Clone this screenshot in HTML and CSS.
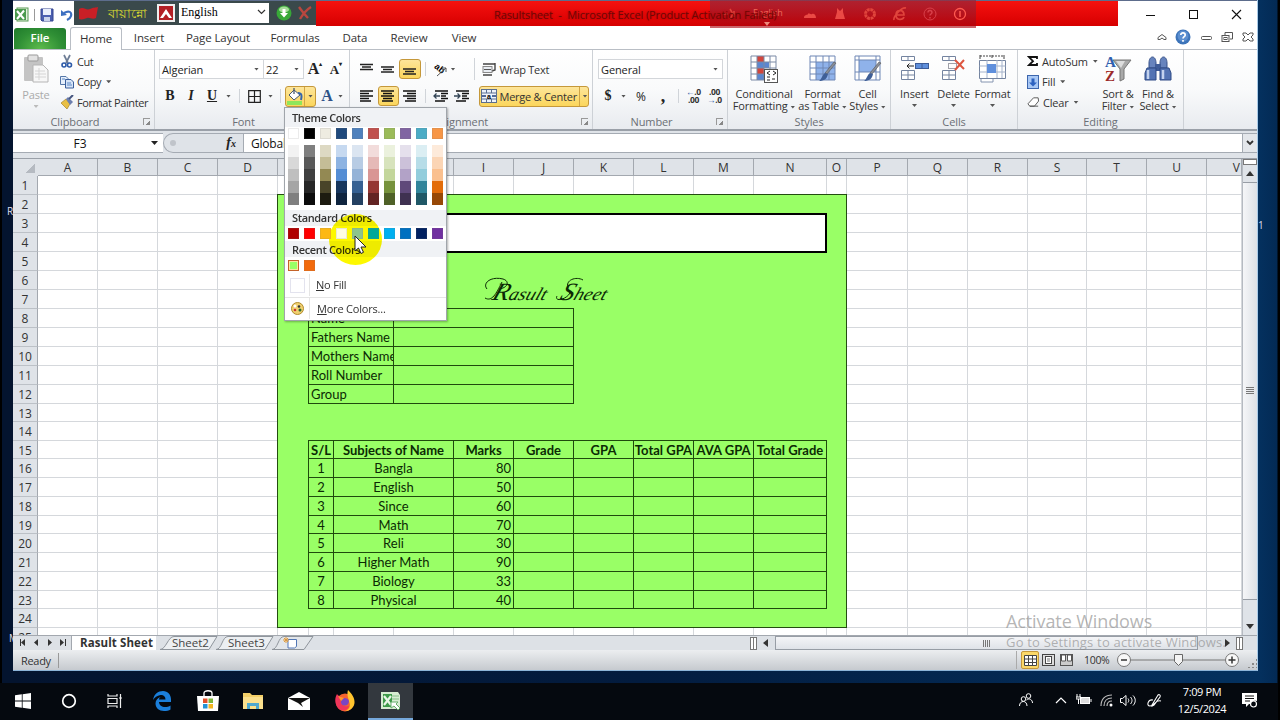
FILE: index.html
```html
<!DOCTYPE html>
<html lang="en">
<head>
    <meta charset="UTF-8">
    <meta name="viewport" content="width=device-width, initial-scale=1.0">
    <title>Rasultsheet - Microsoft Excel</title>
    <link rel="stylesheet" href="styles.css">
</head>
<body>
    <span class="desk-text desk-r">R</span>
    <span class="desk-text desk-m">M</span>
    <span class="desk-text desk-1">1</span>

    <div class="window">
        <!-- Title bar -->
        <div class="titlebar">
            <div class="quick">
                <svg width="15" height="15" viewBox="0 0 15 15"><rect x="3" y="1" width="11" height="13" fill="#e4f2e0" stroke="#5a9a55"/><rect x="1" y="2" width="11" height="11" fill="#4b9a4e"/><path d="M3 4l7 8M10 3.500L3 12" stroke="#fff" stroke-width="2"/></svg>
                <i class="quick-sep"></i>
                <svg width="14" height="14" viewBox="0 0 14 14"><path d="M1 1h12v12H2l-1-1z" fill="#4b5fb0" stroke="#35458f"/><rect x="3" y="1" width="8" height="6" fill="#e9eefb"/><rect x="4" y="9" width="6" height="4" fill="#c9d2ea"/></svg>
                <svg class="undo" width="12" height="14" viewBox="0 0 12 14"><path d="M3 5c5-3 8-1 7 3-.5 2-2 3-4 4" fill="none" stroke="#3c6fc0" stroke-width="2.200"/><path d="M0 8V2l6 5z" fill="#3c6fc0"/></svg>
            </div>
            <div class="keyboard-bar">
                <svg class="flag" width="21" height="15" viewBox="0 0 21 15"><path d="M1 3c5-3 7 2 11 0s5-1 8-2l-2 11c-4 2-6-1-9 0s-5 2-8 1z" fill="#c81f26"/></svg>
                <span class="bangla">বায়ান্নো</span>
                <svg width="18" height="18" viewBox="0 0 18 18"><rect width="18" height="18" fill="#eee"/><rect x="2" y="2" width="14" height="14" fill="#b31f24"/><path d="M3 14l6-9 6 9h-3l-3-4-3 4z" fill="#fff"/></svg>
                <div class="lang-select"><span>English</span><svg width="9" height="6" viewBox="0 0 9 6"><path d="M1 1l3.500 3.500L8 1" fill="none" stroke="#333" stroke-width="1.200"/></svg></div>
                <svg width="16" height="16" viewBox="0 0 16 16"><circle cx="8" cy="8" r="7.500" fill="#38a838"/><ellipse cx="8" cy="4.500" rx="5" ry="3" fill="#a5dc9a"/><path d="M6.500 4h3v4H12l-4 4.500L4 8h2.500z" fill="#fff"/></svg>
                <svg width="16" height="15" viewBox="0 0 16 15"><path d="M2 1c3 4 5 7 9 11M14 1C9 4 6 8 3 13" stroke="#b8473f" stroke-width="2.400" fill="none"/></svg>
            </div>
            <div class="red-bar">
                <span class="title-text">Rasultsheet&nbsp; -&nbsp; Microsoft Excel (Product Activation Failed)</span>
                <div class="ghost-bar">
                    <svg width="16" height="14" viewBox="0 0 16 14"><path d="M1 7h5M8 2l3 5-3 5M12 4v6" stroke="#e0443c" fill="none" stroke-width="1.500"/></svg>
                    <span>English</span>
                    <svg width="14" height="14" viewBox="0 0 14 14"><path d="M1 11c0-4 3-2 4-4s2 1 4 0 4 1 4 4z" fill="#ea4a45"/></svg>
                    <svg width="14" height="14" viewBox="0 0 14 14"><path d="M4 1l3 3 3-3v4l2 7H2l2-7z" fill="#ea4a45"/></svg>
                    <svg width="14" height="14" viewBox="0 0 14 14"><circle cx="7" cy="7" r="4.500" fill="none" stroke="#e0443c" stroke-width="3" stroke-dasharray="2.800 .7"/></svg>
                    <svg width="14" height="14" viewBox="0 0 14 14"><path d="M3 8h8c0-6-8-6-8 0s7 5 8 2M1 13C0 10 8 0 13 1" fill="none" stroke="#e0443c" stroke-width="1.700"/></svg>
                    <svg width="14" height="14" viewBox="0 0 14 14"><circle cx="7" cy="7" r="6" fill="none" stroke="#d8404a"/><path d="M5 5.500c0-3 4-2.500 4 0 0 1.500-2 1.500-2 3M7 10v1.500" fill="none" stroke="#d8404a" stroke-width="1.500"/></svg>
                    <svg width="14" height="14" viewBox="0 0 14 14"><circle cx="7" cy="7" r="5.500" fill="none" stroke="#ff5a50" stroke-width="1.300"/><path d="M7 4v6" stroke="#ff5a50" stroke-width="1.500"/></svg>
                    <i class="ghost-arrow"></i>
                </div>
            </div>
            <div class="win-buttons">
                <svg width="11" height="11" viewBox="0 0 11 11"><path d="M1 6.500h9" stroke="#111"/></svg>
                <svg width="11" height="11" viewBox="0 0 11 11"><rect x="1.500" y="1.500" width="8" height="8" fill="none" stroke="#111"/></svg>
                <svg width="11" height="11" viewBox="0 0 11 11"><path d="M1 1l9 9M10 1l-9 9" stroke="#111" stroke-width="1.100"/></svg>
            </div>
        </div>

        <!-- Ribbon tabs -->
        <div class="tabs">
            <div class="tab-file">File</div>
            <div class="tab tab-home">Home</div>
            <div class="tab t-insert">Insert</div>
            <div class="tab t-layout">Page Layout</div>
            <div class="tab t-formulas">Formulas</div>
            <div class="tab t-data">Data</div>
            <div class="tab t-review">Review</div>
            <div class="tab t-view">View</div>
            <div class="tab-icons">
                <svg width="10" height="8" viewBox="0 0 10 8"><path d="M1 6.500v-2l4-3 4 3v2H7L5 5 3 6.500z" fill="none" stroke="#555"/></svg>
                <svg width="16" height="16" viewBox="0 0 16 16"><circle cx="8" cy="8" r="7.500" fill="#3d74b9"/><circle cx="8" cy="7" r="5.500" fill="#5c8fd0"/><path d="M5.800 6c0-3 4.400-2.800 4.400 0 0 1.600-2.200 1.700-2.200 3.500M8 11v1.800" fill="none" stroke="#fff" stroke-width="1.700"/></svg>
                <svg width="11" height="8" viewBox="0 0 11 8"><rect x=".5" y="3.500" width="10" height="3" rx="1" fill="none" stroke="#555"/></svg>
                <svg width="12" height="11" viewBox="0 0 12 11"><path d="M4 3V.5h7.500V7H9" fill="none" stroke="#555"/><rect x="1" y="3.500" width="7" height="6" fill="none" stroke="#555"/><rect x="3" y="5.500" width="3" height="2" fill="none" stroke="#555"/></svg>
                <svg width="12" height="10" viewBox="0 0 12 10"><path d="M1 1h3l2 2 2-2h3v2L9 5l2 2v2H8L6 7 4 9H1V7l2-2-2-2z" fill="none" stroke="#555"/></svg>
            </div>
        </div>

        <!-- Ribbon -->
        <div class="ribbon">
            <div class="group g-clipboard">
                <div class="group-body">
                    <div class="big paste">
                        <svg width="28" height="30" viewBox="0 0 28 30"><rect x="2" y="3" width="19" height="24" rx="1" fill="#c4c4c4"/><rect x="6" y="1" width="10" height="6" rx="1" fill="#e2e2e2" stroke="#999"/><path d="M11 11h10l5 5v12H11z" fill="#f7f7f7" stroke="#b5b5b5"/><path d="M13 17h10M13 20h11M13 23h11M17 14v12" stroke="#d5d5d5"/></svg>
                        <span>Paste</span>
                        <i class="arrow"></i>
                    </div>
                    <div class="rows">
                        <div class="row"><svg width="14" height="14" viewBox="0 0 14 14"><path d="M4 1l4 8M10 1L6 9" stroke="#6d7d95" stroke-width="1.700"/><circle cx="4" cy="11" r="2" fill="none" stroke="#2d5aa8" stroke-width="1.600"/><circle cx="9.500" cy="11" r="2" fill="none" stroke="#2d5aa8" stroke-width="1.600"/></svg><span>Cut</span></div>
                        <div class="row"><svg width="14" height="14" viewBox="0 0 14 14"><path d="M.5 1.500H6l2 2v6H.5z" fill="#e6effb" stroke="#5577a8"/><path d="M5.500 4.500H11l2.500 2.500v6h-8z" fill="#d6e4f7" stroke="#3a5f9c"/><path d="M7 8h4M7 10h5M2 4h3" stroke="#5b86c4"/></svg><span>Copy</span><i class="arrow"></i></div>
                        <div class="row"><svg width="14" height="14" viewBox="0 0 14 14"><path d="M1 8l5-4 4 5-3 5z" fill="#e8bf45" stroke="#a9842b" stroke-width=".7"/><path d="M6 4l2-2 5 5-3 3z" fill="#6c7fae"/><path d="M9 4l4-4" stroke="#45557f" stroke-width="2"/></svg><span>Format Painter</span></div>
                    </div>
                </div>
                <div class="group-label"><span>Clipboard</span><i class="launcher"></i></div>
            </div>

            <div class="group g-font">
                <div class="group-body stack">
                    <div class="line">
                        <div class="combo font-name"><span>Algerian</span><i class="arrow"></i></div>
                        <div class="combo font-size"><span>22</span><i class="arrow"></i></div>
                        <span class="glyph w22 serif grow">A<sup>&#9652;</sup></span>
                        <span class="glyph w20 serif shrink">A<sup>&#9662;</sup></span>
                    </div>
                    <div class="line">
                        <span class="glyph w22 serif bold">B</span>
                        <span class="glyph w20 serif ital">I</span>
                        <span class="glyph w22 serif under">U</span>
                        <i class="arrow"></i>
                        <i class="sep"></i>
                        <svg class="border-ico" width="13" height="13" viewBox="0 0 13 13"><path d="M.7.7h11.600v11.600H.7zM6.500 1v11M1 6.500h11" fill="none" stroke="#222" stroke-width="1.200"/></svg>
                        <i class="arrow"></i>
                        <i class="sep"></i>
                        <div class="fill-btn">
                            <svg width="18" height="18" viewBox="0 0 18 18"><rect x="1" y="14" width="15" height="4" fill="#8fe65b"/><path d="M3 8l5-5 6 5-6 5z" fill="#fff" stroke="#4a5a70"/><path d="M8 1v6" stroke="#4a5a70" stroke-width="1.300"/><path d="M12 6c4 0 4 3 3 7" fill="none" stroke="#3465ad" stroke-width="2"/></svg>
                            <b><i class="arrow"></i></b>
                        </div>
                        <span class="glyph w22 serif font-color">A</span>
                        <i class="arrow"></i>
                    </div>
                </div>
                <div class="group-label"><span>Font</span><i class="launcher"></i></div>
            </div>

            <div class="group g-align">
                <div class="group-body stack">
                    <div class="line">
                        <span class="ic"><svg width="14" height="12" viewBox="0 0 14 12"><path d="M0 1.500h13M2 4h9M0 6.500h13" stroke="#222" stroke-width="1.500"/></svg></span>
                        <span class="ic"><svg width="14" height="12" viewBox="0 0 14 12"><path d="M0 4h13M2 6.500h9M0 9h13" stroke="#222" stroke-width="1.500"/></svg></span>
                        <span class="ic on"><svg width="14" height="12" viewBox="0 0 14 12"><path d="M0 6h13M2 8.500h9M0 11h13" stroke="#222" stroke-width="1.500"/></svg></span>
                        <i class="sep"></i>
                        <svg class="orient" width="16" height="15" viewBox="0 0 16 15"><text x="2" y="7" font-size="9" transform="rotate(38 4 6)" class="svg-bold">ab</text><path d="M5 14L14 6M10 6h4v4" fill="none" stroke="#555"/></svg>
                        <i class="arrow"></i>
                        <div class="wrap-btn">
                            <svg width="15" height="15" viewBox="0 0 15 15"><path d="M1 2h12M1 13h9M13 1v7l-3 1" fill="none" stroke="#444" stroke-width="1.400"/><rect x="1" y="4.500" width="9" height="6" fill="#e8ecf2" stroke="#888"/><path d="M2 7.500h7" stroke="#555"/></svg>
                            <span>Wrap Text</span>
                        </div>
                    </div>
                    <div class="line">
                        <span class="ic"><svg width="14" height="12" viewBox="0 0 14 12"><path d="M0 1h13M0 3.500h9M0 6h13M0 8.500h9M0 11h11" stroke="#111" stroke-width="1.500"/></svg></span>
                        <span class="ic on"><svg width="14" height="12" viewBox="0 0 14 12"><path d="M0 1h13M2 3.500h9M0 6h13M2 8.500h9M1 11h11" stroke="#111" stroke-width="1.500"/></svg></span>
                        <span class="ic"><svg width="14" height="12" viewBox="0 0 14 12"><path d="M0 1h13M4 3.500h9M0 6h13M4 8.500h9M2 11h11" stroke="#111" stroke-width="1.500"/></svg></span>
                        <i class="sep"></i>
                        <span class="ic"><svg width="15" height="12" viewBox="0 0 15 12"><path d="M2 1h13M8 3.500h7M8 6h5M8 8.500h7M2 11h10" stroke="#111" stroke-width="1.500"/><path d="M7 6H1M3.500 3.500L1 6l2.500 2.500" fill="none" stroke="#345" stroke-width="1.300"/></svg></span>
                        <span class="ic"><svg width="15" height="12" viewBox="0 0 15 12"><path d="M2 1h13M8 3.500h7M8 6h5M8 8.500h7M2 11h10" stroke="#111" stroke-width="1.500"/><path d="M0 6h6M3.500 3.500L6 6 3.500 8.500" fill="none" stroke="#345" stroke-width="1.300"/></svg></span>
                        <div class="merge-btn">
                            <svg width="16" height="14" viewBox="0 0 16 14"><rect x=".5" y=".5" width="15" height="13" fill="#eef3fb" stroke="#5b6f90"/><path d="M1 4h14M1 10h14M5.500 1v3M10.500 1v3M5.500 10v3M10.500 10v3" stroke="#5b6f90"/><path d="M1 7h4M15 7h-4" stroke="#223e7a" stroke-width="1.600"/><text x="6" y="9.500" font-size="7" class="svg-bold">a</text></svg>
                            <span>Merge &amp; Center</span>
                            <b><i class="arrow"></i></b>
                        </div>
                    </div>
                </div>
                <div class="group-label"><span>Alignment</span><i class="launcher"></i></div>
            </div>

            <div class="group g-number">
                <div class="group-body stack">
                    <div class="line">
                        <div class="combo num-format"><span>General</span><i class="arrow"></i></div>
                    </div>
                    <div class="line">
                        <span class="glyph w20 serif bold">$</span>
                        <i class="arrow"></i>
                        <span class="glyph w22 pct">%</span>
                        <span class="glyph w22 serif bold comma">,</span>
                        <i class="sep"></i>
                        <span class="dec"><em>&#8592;</em>.0<br>.00</span>
                        <span class="dec">.00<br><em>&#8594;</em>.0</span>
                    </div>
                </div>
                <div class="group-label"><span>Number</span><i class="launcher"></i></div>
            </div>

            <div class="group g-styles">
                <div class="group-body">
                    <div class="big cond">
                        <svg width="28" height="28" viewBox="0 0 28 28"><path d="M1 1h25v24H1z" fill="#fff"/><path d="M7 1h7v6H7zM7 13h7v6H7z" fill="#d2463c"/><path d="M7 7h12v6H7zM7 19h7v6H7z" fill="#5b86d0"/><path d="M1 1h25v24H1zM7 1v24M14 1v24M20 1v24M1 7h25M1 13h25M1 19h25" fill="none" stroke="#7b8aa5"/><rect x="14.500" y="14.500" width="13" height="13" fill="#fff" stroke="#555"/><path d="M20 16l-3 2 3 2M17 22h3M23 16l3 2-3 2M22 24h3M17 25h3" fill="none" stroke="#222"/></svg>
                        <span>Conditional<br>Formatting <i class="arrow"></i></span>
                    </div>
                    <div class="big fmt-table">
                        <svg width="28" height="28" viewBox="0 0 28 28"><path d="M1 1h25v24H1z" fill="#fff"/><path d="M7 7h19v18H7z" fill="#8fb2ea"/><path d="M1 1h25v24H1zM7 1v24M14 1v24M20 1v24M1 7h25M1 13h25M1 19h25" fill="none" stroke="#6f87b5"/><path d="M27 8L18 19l-2-1 9-11z" fill="#8b8f98" stroke="#555" stroke-width=".6"/><path d="M19 19c-1 5-4 7-9 7 3-2 3-6 6-8z" fill="#3f5f97"/></svg>
                        <span>Format<br>as Table <i class="arrow"></i></span>
                    </div>
                    <div class="big cell-st">
                        <svg width="28" height="28" viewBox="0 0 28 28"><path d="M1 1h25v24H1z" fill="#fff" stroke="#6f87b5"/><path d="M5 5h17v12H5z" fill="#8fb2ea"/><path d="M5 1v24M22 1v24M1 5h25M1 17h25" fill="none" stroke="#6f87b5"/><path d="M27 8L18 19l-2-1 9-11z" fill="#8b8f98" stroke="#555" stroke-width=".6"/><path d="M19 19c-1 5-4 7-9 7 3-2 3-6 6-8z" fill="#3f5f97"/></svg>
                        <span>Cell<br>Styles <i class="arrow"></i></span>
                    </div>
                </div>
                <div class="group-label flat"><span>Styles</span></div>
            </div>

            <div class="group g-cells">
                <div class="group-body">
                    <div class="big cell-btn">
                        <svg width="29" height="28" viewBox="0 0 29 28"><path d="M1.500 1.500h13v4h-13zM8 1.500v4M1.500 15.500h13v9h-13zM8 15.500v9M1.500 20h13" fill="#fff" stroke="#7484a0"/><rect x="15.500" y="8.500" width="13" height="5" fill="#5f8fdc" stroke="#3c5c98"/><path d="M22 8v6" stroke="#3c5c98"/><path d="M14 11H7M9.500 8.500L7 11l2.500 2.500" fill="none" stroke="#222"/></svg>
                        <span>Insert</span><i class="arrow"></i>
                    </div>
                    <div class="big cell-btn">
                        <svg width="29" height="28" viewBox="0 0 29 28"><path d="M3.500 1.500h13v4h-13zM10 1.500v4M3.500 15.500h13v9h-13zM10 15.500v9M3.500 20h13" fill="#fff" stroke="#7484a0"/><rect x="9.500" y="8.500" width="8" height="5" fill="none" stroke="#445" stroke-dasharray="1 1"/><path d="M16 5l9 9M25 5l-9 10" stroke="#dd5640" stroke-width="2"/></svg>
                        <span>Delete</span><i class="arrow"></i>
                    </div>
                    <div class="big cell-btn">
                        <svg width="29" height="28" viewBox="0 0 29 28"><path d="M2 1h24" stroke="#444" stroke-dasharray="2 1"/><path d="M2 0v4M26 0v4M14 0v3" stroke="#444"/><path d="M1.500 5.500h26v18h-26z" fill="#fff" stroke="#7484a0"/><path d="M1.500 11h26M1.500 17h26M9 5v18M19 5v18M24 5v18" stroke="#a5b3cb"/><path d="M9 9h9v9H9z" fill="#5f8fdc"/><path d="M3 24v3h12v-3" fill="#fff" stroke="#8494b0"/></svg>
                        <span>Format</span><i class="arrow"></i>
                    </div>
                </div>
                <div class="group-label flat"><span>Cells</span></div>
            </div>

            <div class="group g-editing">
                <div class="group-body">
                    <div class="rows edit-rows">
                        <div class="row"><svg width="12" height="14" viewBox="0 0 12 14"><path d="M10 5V3H2l4 4.200L2 11h8V9" fill="none" stroke="#111" stroke-width="1.800"/></svg><span>AutoSum</span><i class="arrow"></i></div>
                        <div class="row"><svg width="12" height="14" viewBox="0 0 12 14"><rect x=".5" y=".5" width="11" height="13" fill="#a9c8f5" stroke="#3d66ad"/><path d="M4.500 3.500h3v4H10l-4 4-4-4h2.500z" fill="#2d62c0"/></svg><span>Fill</span><i class="arrow"></i></div>
                        <div class="row"><svg width="13" height="12" viewBox="0 0 14 12"><path d="M1 8l6-6.500h5L12.500 5 8 10.500H3z" fill="#fff" stroke="#555"/><path d="M3 10.500h9" stroke="#555"/></svg><span>Clear</span><i class="arrow"></i></div>
                    </div>
                    <div class="big sort">
                        <svg width="28" height="28" viewBox="0 0 28 28"><path d="M9 5h18l-7 9v10l-4 2V14z" fill="#a9a9a9" stroke="#777"/><path d="M12 6h9l-4 7z" fill="#ddd"/><text x="1" y="12" font-size="15" class="svg-serif" fill="#2f5fae">A</text><text x="1" y="26" font-size="15" class="svg-serif" fill="#9c2a2a">Z</text></svg>
                        <span>Sort &amp;<br>Filter <i class="arrow"></i></span>
                    </div>
                    <div class="big find">
                        <svg width="28" height="28" viewBox="0 0 28 28"><path d="M5 8c0-8 7-8 7 0v5H5zM16 8c0-8 7-8 7 0v5h-7z" fill="#6683bd" stroke="#344f88"/><path d="M11 9h6v7h-6z" fill="#3f5c98"/><path d="M3 13h9v12H1V18zM16 13h9l2 5v7H16z" fill="#5373b3" stroke="#2e4a85"/><path d="M4 15v9M19 15v9" stroke="#c3d2ee" stroke-width="2.500"/></svg>
                        <span>Find &amp;<br>Select <i class="arrow"></i></span>
                    </div>
                </div>
                <div class="group-label flat"><span>Editing</span></div>
            </div>
        </div>

        <!-- Formula bar -->
        <div class="formula-bar">
            <div class="name-box"><span>F3</span><i class="arrow dark"></i></div>
            <div class="fx-box"><i class="fx-dot"></i><span>f<small>x</small></span></div>
            <div class="formula-input">Global</div>
            <div class="formula-expand"><svg width="8" height="6" viewBox="0 0 8 6"><path d="M1 1l3 3 3-3" fill="none" stroke="#333" stroke-width="1.800"/></svg></div>
        </div>

        <!-- Sheet -->
        <div class="sheet-area">
            <div class="sheet" id="sheet">
                <div class="green"></div>
                <div class="banner"></div>
                <div class="sheet-title">
                    <svg width="140" height="34" viewBox="0 0 140 34">
                        <path d="M6 24c7 4 11-4 17-16M8 15C3 9 12 2 24 5c7 2 5 9-4 10" />
                        <path d="M78 22c-3 6 9 4 13-3M104 6c-7-4-18 0-15 8" />
                        <g transform="translate(0 26) skewX(-20)">
                            <text x="12" y="0" textLength="54" lengthAdjust="spacingAndGlyphs"><tspan class="cap">R</tspan>asult</text>
                            <text x="80" y="0" textLength="46" lengthAdjust="spacingAndGlyphs"><tspan class="cap">S</tspan>heet</text>
                        </g>
                    </svg>
                </div>
            </div>
            <div class="vscroll">
                <div class="split-box"></div>
                <div class="vbtn"><i class="up"></i></div>
                <div class="vthumb"><i class="grip"></i></div>
                <div class="vbtn"><i class="down"></i></div>
            </div>
        </div>

        <!-- Sheet tabs -->
        <div class="sheet-tabs">
            <div class="nav-btns">
                <svg width="52" height="9" viewBox="0 0 52 9"><path d="M8 1v7L4 4.500zM21 1v7l-4-3.500zM31 1v7l4-3.500zM43 1v7l4-3.500z" fill="#333"/><path d="M3.500 1v7M48.500 1v7" stroke="#333"/></svg>
            </div>
            <div class="stab active">Rasult Sheet</div>
            <svg class="stab-shape" width="160" height="15" viewBox="0 0 160 15">
                <path d="M2 13.500c6 0 8-13 14-13h43L51 13.500z" fill="#eceff2" stroke="#8f959c"/>
                <path d="M58 13.500c6 0 6-13 12-13h45l-8 13z" fill="#eceff2" stroke="#8f959c"/>
                <path d="M114 13.500c6 0 6-13 12-13h29l-9 13z" fill="#e2e6ea" stroke="#8f959c"/>
                <text x="14" y="11">Sheet2</text>
                <text x="70" y="11">Sheet3</text>
                <path d="M130 3.500h8.500v7l-2 1.500H130z" fill="#fff" stroke="#5277b5"/>
                <path d="M128 1v6M125 4h6M126 2l4 4M130 2l-4 4" stroke="#e09a3a"/>
            </svg>
            <div class="hscroll">
                <i class="hsplit"></i>
                <i class="scroll-left"></i>
                <div class="hthumb"><i class="grip-h"></i></div>
                <i class="scroll-right"></i>
                <i class="hsplit"></i>
            </div>
        </div>

        <!-- Status bar -->
        <div class="status">
            <span class="ready">Ready</span>
            <div class="views">
                <span class="view on"><svg width="13" height="11" viewBox="0 0 13 11"><path d="M.5.5h12v10H.5zM4.500.5v10M8.500.5v10M.5 4h12M.5 7.500h12" fill="#fff" stroke="#444"/></svg></span>
                <span class="view"><svg width="13" height="12" viewBox="0 0 13 12"><rect x=".5" y=".5" width="12" height="11" fill="#ddd" stroke="#444"/><rect x="3.500" y="2.500" width="6" height="7" fill="#fff" stroke="#444"/><path d="M5 5h3M5 7h3" stroke="#777"/></svg></span>
                <span class="view"><svg width="13" height="12" viewBox="0 0 13 12"><rect x=".5" y=".5" width="12" height="11" fill="#ccc" stroke="#555"/><path d="M1.500 1h4v6h-4zM7.500 1h4v6h-4z" fill="#fff" stroke="#555"/></svg></span>
            </div>
            <span class="zoom-text">100%</span>
            <svg class="zoom-slider" width="124" height="16" viewBox="0 0 124 16"><path d="M14 8h96" stroke="#777"/><circle cx="8" cy="8" r="6.500" fill="#f8f8f8" stroke="#777"/><path d="M5 8h6" stroke="#333" stroke-width="1.500"/><circle cx="116" cy="8" r="6.500" fill="#f8f8f8" stroke="#777"/><path d="M112.500 8h7M116 4.500v7" stroke="#333" stroke-width="1.500"/><path d="M58.500 2.500h8v7l-4 4-4-4z" fill="#f4f4f4" stroke="#666"/></svg>
            <i class="resize"></i>
        </div>
    </div>

    <!-- Fill colour menu -->
    <div class="color-menu">
        <div class="menu-head">Theme Colors</div>
        <div class="swatches" id="theme-main"></div>
        <div class="shades" id="theme-shades"></div>
        <div class="menu-head second">Standard Colors</div>
        <div class="swatches" id="standard"></div>
        <div class="menu-head third">Recent Colors</div>
        <div class="swatches" id="recent"></div>
        <div class="menu-item no-fill"><b><i class="empty-box"></i></b><span><u>N</u>o Fill</span></div>
        <div class="menu-item more"><b><svg width="13" height="13" viewBox="0 0 13 13"><circle cx="6.500" cy="6.500" r="6" fill="#f0d06f" stroke="#b08a2a"/><circle cx="4" cy="4" r="1.500" fill="#fff"/><circle cx="4" cy="8" r="1.300" fill="#c33"/><circle cx="8" cy="4.500" r="1.300" fill="#333"/><circle cx="9" cy="8" r="1.500" fill="#286a35"/></svg></b><span><u>M</u>ore Colors...</span></div>
        <i class="halo"></i>
    </div>
    <svg class="cursor" width="14" height="20" viewBox="0 0 14 20"><path d="M1 1v15l3.500-3 2.500 5.500 2.500-1.200L7 12h5z" fill="#fff" stroke="#222"/></svg>

    <div class="watermark">
        <p>Activate Windows</p>
        <small>Go to Settings to activate Windows.</small>
    </div>

    <!-- Taskbar -->
    <div class="taskbar">
        <div class="task"><svg width="16" height="16" viewBox="0 0 16 16"><path d="M0 2.300L6.800 1.300V7.600H0zM7.600 1.200L16 0v7.600H7.600zM0 8.400h6.800v6.300L0 13.700zM7.600 8.400H16V16l-8.400-1.200z" fill="#fff"/></svg></div>
        <div class="task"><svg width="16" height="16" viewBox="0 0 16 16"><circle cx="8" cy="8" r="6.300" fill="none" stroke="#fff" stroke-width="1.700"/></svg></div>
        <div class="task"><svg width="16" height="16" viewBox="0 0 16 16"><path d="M1 1v2h9V1M1 15v-2h9v2M1 5.500h9v5H1zM13.500 1v14M12 5h3" fill="none" stroke="#eee" stroke-width="1.200"/></svg></div>
        <div class="task wide"><svg width="20" height="20" viewBox="0 0 20 20"><path d="M1 9C2 3 6 0 11 0c5 0 8 4 8 8.500V11H7c0 3 3 5 6 5 2 0 4-.5 5.500-1.500v4C17 19.500 14.500 20 12 20c-5 0-8.500-3-8.500-7.500 0-3 2-5.500 5-6.500-1 1-1.500 1.500-1.500 2.500h6.500C13.500 5 11 3.500 8.500 4 5 4.500 2.500 6.500 1 9z" fill="#1b7fdb"/></svg></div>
        <div class="task store"><svg width="22" height="22" viewBox="0 0 22 22"><path d="M7 6V3c0-3 8-3 8 0v3" fill="none" stroke="#fff" stroke-width="1.300"/><path d="M0 6h22l-1 15H1z" fill="#fff"/><path d="M6 8.500h4.500V13H6z" fill="#e3512b"/><path d="M11.500 8.500H16V13h-4.500z" fill="#7db73a"/><path d="M6 14h4.500v4.500H6z" fill="#2493d6"/><path d="M11.500 14H16v4.500h-4.500z" fill="#f4b623"/></svg></div>
        <div class="task"><svg width="20" height="18" viewBox="0 0 20 18"><path d="M0 1h7l2 2h11v14H0z" fill="#f3cf68"/><path d="M0 5h20v12H0z" fill="#fbe08d"/><path d="M4 17v-6h12v6h-3v-3H7v3z" fill="#4fa8cf"/></svg></div>
        <div class="task"><svg width="22" height="18" viewBox="0 0 22 18"><path d="M0 6l11-6 11 6v12H0z" fill="#fff"/><path d="M0 6h22l-9 5 2 4-5-4z" fill="#111"/></svg></div>
        <div class="task"><svg width="22" height="22" viewBox="0 0 22 22"><circle cx="11" cy="12.500" r="9" fill="#f5642e"/><path d="M14 0c4 4 7 8 6.500 13-.5 4-4 8-9 8 4-2 5-5 4-8-1-5-3-8-1.500-13z" fill="#ffc42e"/><path d="M3 4c1 2 3 2 6 4-2 1-3 3-2 5 1 3 5 4 8 3-1 4-6 6-10 3-4-4-5-10-2-15z" fill="#f0355a"/><path d="M8 9c2-2 6-1 7 2 0 3-2 5-5 4.500S6 12 8 9z" fill="#7b45c4"/><path d="M4 6l6 2-3 3z" fill="#ff9a2a"/></svg></div>
        <div class="task current"><svg width="21" height="20" viewBox="0 0 21 20"><path d="M1 1h17l2 3v14H1z" fill="#d6ecd1"/><path d="M3 3h9v13H3z" fill="#3c9a48"/><path d="M4 5l7 9M11 5l-7 9" stroke="#e8f5e5" stroke-width="2.200"/><path d="M12 5h7M12 8h7" stroke="#86c08a"/><path d="M11 11h7l-2 2 4 4-2 2-4-4-3 2z" fill="#fff" stroke="#69b06d"/></svg></div>
        <div class="tray">
            <svg class="people" width="14" height="14" viewBox="0 0 14 14"><circle cx="4.500" cy="6" r="2.300" fill="none" stroke="#fff"/><circle cx="9.500" cy="3" r="2.300" fill="none" stroke="#fff"/><path d="M.5 13c0-6 7.500-6 7.500 0M7.500 7c3-2.500 6 0 6 3" fill="none" stroke="#fff"/></svg>
            <svg class="chev" width="12" height="8" viewBox="0 0 12 8"><path d="M1 7l5-5 5 5" fill="none" stroke="#fff" stroke-width="1.200"/></svg>
            <svg class="batt" width="16" height="12" viewBox="0 0 16 12"><rect x="4.500" y="3.500" width="9" height="6" fill="#ddd" stroke="#fff"/><path d="M15 5v3M1 0v3M4 0v3M0 3h5v2H0zM2.500 5v5" fill="none" stroke="#fff"/></svg>
            <svg class="wifi" width="13" height="13" viewBox="0 0 13 13"><path d="M1 12C1 5 5 1 12 1M4 12c0-5 3-8 8-8M7 12c0-3 2-5 5-5" fill="none" stroke="#bbb" stroke-width="1.200"/><circle cx="11" cy="11" r="1.500" fill="#fff"/></svg>
            <svg class="vol" width="16" height="13" viewBox="0 0 16 13"><path d="M.5 4.500h2l3.500-3v10l-3.500-3h-2zM8 4.500c1 1.500 1 2.500 0 4M10.500 3c2 2.500 2 4.500 0 7M13 1.500c3 3 3 7 0 10" fill="none" stroke="#fff"/></svg>
            <svg class="pen" width="15" height="15" viewBox="0 0 15 15"><path d="M5 12L11 2c1-1 3 0 2 2L7 12l-2 1zM6 7c-5-1-7 6-3 6 5 0 5-7 11-5" fill="none" stroke="#fff" stroke-width="1.100"/></svg>
            <div class="clock">7:09 PM<br>12/5/2024</div>
            <svg class="notif" width="16" height="16" viewBox="0 0 16 16"><path d="M0 1h15v8c-4-1-6 1-6 3H7l-3 3v-3H0z" fill="#fff"/><path d="M3 4h9M3 6.500h9M3 9h5" stroke="#111"/><circle cx="11.500" cy="12" r="3" fill="none" stroke="#fff" stroke-width="1.200"/></svg>
        </div>
    </div>

    <script src="script.js"></script>
</body>
</html>
```

FILE: styles.css
```css
* {
    box-sizing: border-box;
}

body {
    margin: 0;
    width: 1280px;
    height: 720px;
    overflow: hidden;
    position: relative;
    font-family: "Open Sans", "Noto Sans", sans-serif;
    font-size: 11px;
    color: #333;
    background: linear-gradient(90deg, #000 0 2px, #04142f 2px 14px, #031c3f 50%, #04315f 1258px, #032a55 1277px, #000 1278px);
}

i {
    font-style: normal;
}

.desk-text {
    position: absolute;
    color: #dde;
    font-size: 10px;
}

.desk-r { left: 7px; top: 204px; }
.desk-m { left: 9px; top: 631px; }
.desk-1 { left: 1258px; top: 218px; }

.window {
    position: relative;
    margin-left: 13px;
    width: 1245px;
    height: 671px;
    background: #fff;
    border-right: 1px solid #a9cbe8;
    border-bottom: 1px solid #8cb4d8;
}

/* Title bar */
.titlebar {
    display: flex;
    height: 26px;
    border-top: 1px solid #5d6d8c;
    background: #fff;
}

.quick {
    width: 61px;
    display: flex;
    align-items: center;
    gap: 5px;
    padding: 2px 0 0 1px;
}

.quick .undo {
    margin-left: 2px;
}

.quick-sep {
    width: 1px;
    height: 12px;
    background: #999;
}

.keyboard-bar {
    width: 242px;
    height: 24px;
    background: #3a494b;
    display: flex;
    align-items: center;
}

.flag {
    margin-left: 4px;
}

.bangla {
    width: 56px;
    text-align: center;
    color: #d6d531;
    font-size: 13px;
    line-height: 20px;
    margin-right: 2px;
}

.lang-select {
    margin: 0 7px 0 4px;
    width: 90px;
    height: 20px;
    background: #fff;
    display: flex;
    align-items: center;
    justify-content: space-between;
    padding: 0 3px 2px 2px;
    font-family: "Liberation Serif", serif;
    font-size: 12px;
    color: #000;
}

.keyboard-bar > svg:last-child {
    margin-left: 5px;
}

.red-bar {
    width: 802px;
    background: linear-gradient(#f5120e, #e60808 50%, #d60000);
    display: flex;
    position: relative;
}

.title-text {
    position: relative;
    z-index: 1;
    margin-left: 178px;
    width: 290px;
    line-height: 27px;
    font-size: 11px;
    letter-spacing: -0.1px;
    color: #6e0806;
    text-shadow: 0 0 2px #a00;
    white-space: nowrap;
}

.ghost-bar {
    position: absolute;
    left: 394px;
    top: -1px;
    width: 266px;
    height: 28px;
    background: linear-gradient(rgba(150, 40, 60, .75), rgba(170, 0, 10, .6));
    display: flex;
    align-items: center;
    gap: 16px;
    padding-left: 12px;
}

.ghost-bar span {
    width: 30px;
    margin: -3px 4px 0 0;
    font-size: 9px;
    color: #ef6a5c;
}

.ghost-bar svg:first-child {
    margin-right: -1px;
}

.ghost-arrow {
    position: absolute;
    left: 54px;
    top: 22px;
    width: 6px;
    height: 4px;
    background: #ef8a7c;
    clip-path: polygon(0 0, 100% 0, 50% 100%);
}

.win-buttons {
    flex: 1;
    display: flex;
    gap: 32px;
    justify-content: flex-end;
    align-items: center;
    padding: 1px 15px 0 0;
}

/* Ribbon tabs */
.tabs {
    display: flex;
    align-items: flex-end;
    height: 24px;
    border-bottom: 1px solid #b9bec5;
    font-size: 11.500px;
    letter-spacing: -0.1px;
}

.tab-file {
    width: 52px;
    height: 21px;
    margin: 0 4px 0 1px;
    text-align: center;
    line-height: 20px;
    color: #fff;
    font-weight: 600;
    background: radial-gradient(ellipse at 50% 100%, #5cbb4b, #2f8f35 60%, #1f7a2b);
    border-radius: 3px 3px 0 0;
}

.tab {
    height: 22px;
    line-height: 22px;
    text-align: center;
    white-space: nowrap;
}

.tab-home {
    width: 52px;
    background: #fff;
    border: 1px solid #b9bec5;
    border-bottom: none;
    border-radius: 3px 3px 0 0;
    margin-bottom: -1px;
    height: 23px;
}

.t-insert { width: 54px; }
.t-layout { width: 84px; }
.t-formulas { width: 70px; }
.t-data { width: 50px; }
.t-review { width: 58px; }
.t-view { width: 52px; }

.tab-icons {
    margin-left: auto;
    height: 24px;
    display: flex;
    align-items: center;
    gap: 9px;
    padding-right: 3px;
}

.tab-icons svg:first-child {
    margin-right: -1px;
}

.tab-icons svg:nth-child(2) {
    margin-right: 1px;
}

/* Ribbon */
.ribbon {
    display: flex;
    height: 81px;
    background: linear-gradient(#fff, #f9fafb 50%, #e8ebef);
    border-bottom: 2px solid #9aa0a8;
}

.group {
    border-right: 1px solid #cdd1d6;
    display: flex;
    flex-direction: column;
}

.g-clipboard { width: 142px; }
.g-font { width: 195px; }
.g-align { width: 243px; }
.g-number { width: 135px; }
.g-styles { width: 163px; }
.g-cells { width: 127px; }
.g-editing { width: 166px; }

.group-body {
    height: 65px;
    display: flex;
}

.group-label {
    display: flex;
    align-items: center;
    height: 13px;
    color: #6b6f75;
    padding-right: 4px;
    letter-spacing: -0.1px;
}

.group-label span {
    flex: 1;
    text-align: center;
    padding-right: 6px;
}

.group-label.flat {
    padding-right: 0;
}

.group-label.flat span {
    padding: 0;
}

.launcher {
    width: 7px;
    height: 7px;
    border-top: 1px solid #999;
    border-left: 1px solid #999;
    background: linear-gradient(135deg, transparent 60%, #888 60%);
}

.arrow {
    display: inline-block;
    flex: none;
    width: 5px;
    height: 3px;
    background: #555;
    clip-path: polygon(0 0, 100% 0, 50% 100%);
    vertical-align: middle;
}

.sep {
    width: 1px;
    height: 14px;
    background: #d0d4d9;
}

.rows {
    padding-top: 1px;
}

.row {
    display: flex;
    align-items: center;
    height: 20.500px;
    white-space: nowrap;
}

.row svg {
    margin-right: 3px;
}

.row .arrow {
    margin-left: 5px;
}

.g-clipboard .row span {
    letter-spacing: -0.4px;
}

.g-clipboard .row {
    margin-left: -1px;
}

.big {
    display: flex;
    flex-direction: column;
    align-items: center;
    padding-top: 5px;
    text-align: center;
    line-height: 12px;
    white-space: nowrap;
    letter-spacing: -0.15px;
}

.big svg {
    flex: none;
    margin-bottom: 5px;
}

.big > .arrow {
    margin-top: 4px;
}

.paste {
    width: 48px;
    padding: 4px 2px 0 0;
    color: #aaa;
}

.paste .arrow {
    background: #bbb;
}

.stack {
    flex-direction: column;
    padding: 9px 0 0 4px;
    gap: 7px;
}

.line {
    display: flex;
    align-items: center;
    height: 20px;
}

.combo {
    height: 20px;
    border: 1px solid #d3d6da;
    background: #fff;
    display: flex;
    align-items: center;
    justify-content: space-between;
    padding: 0 4px 0 2px;
    color: #222;
    letter-spacing: -0.1px;
}

.font-name { width: 105px; }
.font-size { width: 40px; border-left: none; }
.num-format { width: 125px; margin-left: 1px; }

.glyph {
    text-align: center;
    color: #222;
}

.w20 { width: 20px; }
.w22 { width: 22px; }

.serif {
    font-family: "Liberation Serif", serif;
    font-size: 14px;
    font-weight: bold;
}

.grow { font-size: 16px; }
.shrink { font-size: 13px; }

.glyph sup {
    font-size: 6px;
    vertical-align: 8px;
}

.ital { font-style: italic; }
.under { text-decoration: underline; }

.border-ico { margin: 0 7px 0 8px; }
.g-font .under + .arrow { margin: 0 8px 0 3px; }
.border-ico + .arrow { margin-right: 7px; }

.fill-btn,
.merge-btn,
.ic.on {
    background: linear-gradient(#fde59a, #fbd65c);
    border: 1px solid #c5983a;
    border-radius: 3px;
}

.fill-btn {
    display: flex;
    align-items: center;
    width: 31px;
    height: 21px;
    margin-left: 4px;
}

.fill-btn b,
.merge-btn b {
    height: 100%;
    border-left: 1px solid #d0a545;
    display: flex;
    align-items: center;
    padding-left: 3px;
}

.font-color {
    color: #2d5287;
    font-size: 16px;
}

.g-align .stack {
    padding-left: 6px;
}

.ic {
    width: 21.500px;
    height: 20px;
    display: flex;
    align-items: center;
    justify-content: center;
}

.ic + .sep {
    margin: 0 4px;
}

.orient {
    margin: 0 3px 0 2px;
    overflow: visible;
}

.svg-bold {
    font-family: "Liberation Sans", sans-serif;
    font-weight: bold;
}

.svg-serif {
    font-family: "Liberation Serif", serif;
    font-weight: bold;
}

.wrap-btn {
    display: flex;
    align-items: center;
    gap: 3px;
    margin-left: 18px;
    padding-left: 7px;
    height: 22px;
    border-left: 1px solid #d0d4d9;
    white-space: nowrap;
    letter-spacing: -0.3px;
}

.merge-btn {
    display: flex;
    align-items: center;
    gap: 3px;
    width: 110px;
    height: 21px;
    margin-left: 6px;
    padding-left: 1px;
    white-space: nowrap;
    letter-spacing: -0.25px;
}

.merge-btn span {
    width: 76px;
}

.pct { font-size: 12px; margin-left: 4px; }
.comma { font-size: 18px; line-height: 10px; }
.g-number .sep { margin: 0 4px; }
.g-number .bold + .arrow { margin-left: 3px; }
.g-number .line:last-child { padding-left: 1px; }

.dec {
    width: 21px;
    font-size: 8.500px;
    font-weight: bold;
    line-height: 8px;
    text-align: center;
    white-space: nowrap;
    letter-spacing: -0.3px;
}

.dec em {
    font-style: normal;
    color: #3461a8;
}

.cond { width: 72px; }
.fmt-table { width: 45px; }
.cell-st { width: 45px; }
.cell-btn { width: 39px; }
.g-cells .group-body { padding-left: 4px; }
.edit-rows { width: 80px; padding-left: 9px; letter-spacing: -0.2px; }
.sort { width: 40px; }
.find { width: 40px; }

/* Formula bar */
.formula-bar {
    height: 28px;
    padding: 2px 0 5px;
    display: flex;
    background: #dfe3e8;
    border-bottom: 1px solid #9aa0a8;
}

.formula-bar > div {
    height: 20px;
    border-top: 1px solid #a5abb3;
    border-bottom: 1px solid #a5abb3;
    background: #fff;
}

.name-box {
    width: 150px;
    display: flex;
    align-items: center;
    padding-right: 5px;
    font-size: 12px;
    color: #111;
}

.name-box span {
    flex: 1;
    text-align: center;
    padding-right: 4px;
}

.arrow.dark {
    width: 7px;
    height: 4px;
    background: #222;
}

.formula-bar .fx-box {
    width: 80px;
    display: flex;
    align-items: center;
    justify-content: space-between;
    padding: 0 7px 0 6px;
    background: #dfe3e8;
    border-left: 1px solid #a5abb3;
    border-radius: 10px 0 0 10px;
    font: italic bold 14px "Liberation Serif", serif;
    color: #222;
}

.fx-box small { font-size: 10px; }

.fx-dot {
    width: 6px;
    height: 6px;
    border-radius: 3px;
    background: #c0c4ca;
}

.formula-bar .formula-input {
    flex: 1;
    border-left: 1px solid #a5abb3;
    padding-left: 7px;
    font-size: 12px;
    line-height: 19px;
    letter-spacing: -0.2px;
    color: #111;
}

.formula-bar .formula-expand {
    width: 15px;
    background: #e4e7eb;
    border-left: 1px solid #a5abb3;
    display: flex;
    align-items: center;
    justify-content: center;
}

/* Sheet grid */
.sheet-area {
    display: flex;
    height: 476px;
    overflow: hidden;
}

.sheet {
    width: 1229px;
    flex: none;
    display: grid;
    grid-template-columns: 25px 60px 60px 60px 60px 31px 25px 60px 60px 60px 60px 60px 60px 60px 73px 20px 61px 60px 60px 59px 60px 60px 35px;
    grid-template-rows: 17px 19px 19px 19px 19px 19px 19px 19px 19px 19px 19px 19px 19px 18px 19px 18px 19px 19px 19px 18px 19px 19px 19px 18px 19px 19px;
    overflow: hidden;
}

.cell {
    border-right: 1px solid #d5d8dc;
    border-bottom: 1px solid #d5d8dc;
    background: #fff;
}

.head {
    background: #dfe3e8;
    border-right: 1px solid #a3a8af;
    border-bottom: 1px solid #a3a8af;
    text-align: center;
    font-size: 12px;
    line-height: 17px;
    color: #333;
    overflow: hidden;
}

.head.rowhead {
    line-height: 20px;
    border-bottom-color: #bcc1c7;
}

.head.last {
    text-align: right;
    padding-right: 1px;
}

.corner {
    background: linear-gradient(135deg, #dfe3e8 60%, #b5bac1 60%);
    border: 3px solid #dfe3e8;
    border-left-width: 9px;
}

.green,
.banner,
.sheet-title,
.data {
    z-index: 1;
}

.green {
    grid-area: 3 / 6 / 26 / 17;
    background: #99ff66;
    border: 1px solid #234d10;
    margin: -1px 0 0 -1px;
}

.banner {
    grid-area: 4 / 7 / 6 / 16;
    background: #fff;
    border: 2px solid #000;
    margin: -1px 0 -1px -1px;
}

.sheet-title {
    grid-area: 7 / 7 / 9 / 16;
    padding: 3px 0 0 170px;
    font-family: "Liberation Serif", serif;
    font-style: italic;
    font-size: 18px;
}

.sheet-title svg {
    fill: #0b2a04;
}

.sheet-title path {
    fill: none;
    stroke: #0b2a04;
    stroke-width: 1;
}

.sheet-title .cap {
    font-size: 25px;
}

.data {
    border: 1px solid #1f4a0d;
    margin: -1px 0 0 -1px;
    padding: 0 2px;
    font-family: Lato, "Open Sans", sans-serif;
    font-size: 13px;
    line-height: 19px;
    color: #0b2a04;
    white-space: nowrap;
    overflow: hidden;
}

.data.center { text-align: center; padding: 0; }
.data.num { text-align: right; padding: 0 2px; }
.data.th { font-weight: bold; text-align: center; padding: 0; }

/* Scroll bars */
.vscroll {
    width: 15px;
    background: #dfe3e8;
    display: flex;
    flex-direction: column;
    border-left: 1px solid #b5bac1;
}

.split-box {
    height: 6px;
    border: 1px solid #777;
    background: #fff;
}

.vbtn {
    height: 17px;
    display: flex;
    align-items: center;
    justify-content: center;
}

.vthumb {
    flex: none;
    height: 418px;
    border: 1px solid #979da5;
    border-width: 1px 0;
    background: linear-gradient(90deg, #f5f6f8, #dde1e6);
    display: flex;
    align-items: center;
    justify-content: center;
    margin-bottom: 18px;
}

.vthumb .grip {
    width: 8px;
    height: 8px;
    background: repeating-linear-gradient(#777 0 1px, transparent 1px 2px);
}

.up, .down {
    width: 8px;
    height: 5px;
    background: #333;
    clip-path: polygon(50% 0, 100% 100%, 0 100%);
}

.down { clip-path: polygon(0 0, 100% 0, 50% 100%); }

/* Sheet tabs */
.sheet-tabs {
    height: 15px;
    display: flex;
    background: #dde1e6;
    border-top: 1px solid #a3a8af;
}

.nav-btns {
    width: 59px;
    padding: 0 0 0 4px;
    line-height: 13px;
    border-right: 1px solid #a3a8af;
}

.stab.active {
    width: 84px;
    padding-left: 8px;
    background: #fff;
    font-weight: bold;
    font-size: 11.500px;
    line-height: 14px;
    white-space: nowrap;
    letter-spacing: 0.1px;
}

.stab-shape {
    margin-left: 2px;
    font-size: 11.500px;
    fill: #444;
}

.hscroll {
    margin-left: auto;
    width: 507px;
    display: flex;
    align-items: center;
}

.hsplit {
    width: 7px;
    height: 13px;
    border: 1px solid #777;
    background: linear-gradient(90deg, #fff 40%, #777 40% 60%, #fff 60%);
}

.scroll-left,
.scroll-right {
    width: 5px;
    height: 8px;
    background: #333;
}

.scroll-left {
    margin: 0 7px 0 6px;
    clip-path: polygon(0 50%, 100% 0, 100% 100%);
}

.hthumb {
    width: 423px;
    height: 14px;
    border: 1px solid #979da5;
    background: linear-gradient(#f4f5f7, #dfe3e8);
    display: flex;
    align-items: center;
    justify-content: center;
}

.grip-h {
    width: 8px;
    height: 7px;
    background: repeating-linear-gradient(90deg, #777 0 1px, transparent 1px 2px);
}

.scroll-right {
    margin: 0 6px 0 27px;
    clip-path: polygon(0 0, 100% 50%, 0 100%);
}

/* Status bar */
.status {
    height: 20px;
    display: flex;
    align-items: center;
    background: linear-gradient(#eceef0, #c6cacf);
}

.ready {
    width: 46px;
    padding-left: 8px;
    border-right: 1px solid #999;
    letter-spacing: -0.3px;
}

.views {
    display: flex;
    margin-left: auto;
    padding-left: 4px;
    border-left: 1px solid #aaa;
}

.view {
    width: 18px;
    height: 18px;
    display: flex;
    align-items: center;
    justify-content: center;
}

.view.on {
    background: #fbd869;
    border: 1px solid #c5983a;
    border-radius: 2px;
}

.zoom-text {
    width: 32px;
    margin-left: 9px;
    font-size: 10.500px;
    letter-spacing: -0.3px;
}

.resize {
    width: 10px;
    height: 10px;
    margin: 6px 0 0 7px;
    background: radial-gradient(#888 30%, transparent 35%) 0 0 / 4px 4px;
    clip-path: polygon(100% 0, 100% 100%, 0 100%);
}

/* Fill colour menu */
.color-menu {
    position: absolute;
    z-index: 2;
    left: 284px;
    top: 107px;
    width: 163px;
    height: 214px;
    background: #fff;
    border: 1px solid #a0a5ab;
    box-shadow: 1px 1px 2px rgba(0, 0, 0, .3);
}

.menu-head {
    height: 19px;
    padding-left: 7px;
    background: #f0f2f5;
    font-weight: 600;
    line-height: 20px;
    letter-spacing: -0.35px;
    color: #333;
}

.menu-head.second {
    height: 16px;
    line-height: 15px;
    margin-top: 5px;
}

.menu-head.third {
    height: 16px;
    line-height: 17px;
}

.swatches {
    display: flex;
    gap: 5px;
    padding-left: 3px;
    height: 17px;
    align-items: center;
}

.swatches i {
    position: relative;
    z-index: 1;
    width: 11px;
    height: 11px;
    border: 1px solid rgba(120, 120, 120, .15);
}

#theme-main { height: 12px; }
#standard { height: 15px; }

.swatches i.picked {
    border: 1px solid #c4622a;
    box-shadow: inset 0 0 0 1px #fbe7a0;
}

.shades {
    display: grid;
    grid-template-columns: repeat(10, 11px);
    grid-auto-rows: 12px;
    column-gap: 5px;
    padding: 6px 0 0 3px;
}

.menu-item {
    display: flex;
    align-items: center;
    height: 22px;
    line-height: 20px;
}

.menu-item b {
    width: 25px;
    height: 100%;
    display: flex;
    align-items: center;
    justify-content: center;
    border-right: 1px solid #e5e5e5;
}

.menu-item span {
    padding-left: 6px;
    letter-spacing: -0.2px;
}

.more {
    margin-top: 1px;
    border-top: 1px solid #e5e5e5;
}

.more span {
    padding-left: 7px;
}

.empty-box {
    width: 15px;
    height: 15px;
    border: 1px solid #e3e3ee;
}

.halo {
    position: absolute;
    left: 44px;
    top: 106px;
    width: 53px;
    height: 51px;
    border-radius: 50%;
    background: #fdf800;
    mix-blend-mode: multiply;
}

.cursor {
    position: absolute;
    z-index: 3;
    left: 354px;
    top: 235px;
}

.watermark {
    position: absolute;
    z-index: 2;
    left: 1006px;
    top: 608px;
    color: rgba(140, 140, 140, .65);
    white-space: nowrap;
}

.watermark p {
    margin: 0;
    font-size: 18px;
    letter-spacing: -0.1px;
    line-height: 26px;
}

.watermark small {
    display: block;
    font-size: 13px;
    letter-spacing: 0.2px;
    line-height: 17px;
}

/* Taskbar */
.taskbar {
    position: absolute;
    left: 0;
    top: 683px;
    width: 1278px;
    height: 37px;
    background: #05090f;
    display: flex;
    align-items: center;
}

.task {
    width: 46px;
    height: 37px;
    display: flex;
    align-items: center;
    justify-content: center;
    padding-bottom: 1px;
}

.task.wide {
    width: 47px;
}

.task.store {
    width: 45px;
}

.task.current {
    width: 45px;
    padding: 0;
    background: #33383e;
    border-bottom: 2px solid #76a9dc;
}

.tray {
    margin-left: auto;
    display: flex;
    align-items: center;
    color: #fff;
    padding: 0 20px 3px 0;
}

.people { margin-right: 22px; }
.chev { margin-right: 9px; }
.batt { margin-right: 8px; }
.wifi { margin-right: 7px; }
.vol { margin-right: 11px; }

.clock {
    width: 80px;
    text-align: center;
    line-height: 17px;
    letter-spacing: -0.4px;
}
```

FILE: script.js
```js
const sheet = document.getElementById("sheet");

// Add one grid item at the given columns and rows
function add(cls, text, col, row, colEnd, rowEnd) {
    const el = document.createElement("div");
    el.className = cls;
    el.textContent = text;
    el.style.gridArea = `${row} / ${col} / ${rowEnd || row + 1} / ${colEnd || col + 1}`;
    sheet.appendChild(el);
}

// Headers and empty cells
const letters = "ABCDEFGHIJKLMNOPQRSTUV".split("");
add("head corner", "", 1, 1);
letters.forEach((letter, i) => {
    add("head" + (letter === "V" ? " last" : ""), letter, i + 2, 1);
});
for (let r = 1; r <= 25; r++) {
    add("head rowhead", r, 1, r + 1);
    for (let c = 0; c < letters.length; c++) {
        add("cell", "", c + 2, r + 1);
    }
}

// Student details
["Name", "Fathers Name", "Mothers Name", "Roll Number", "Group"].forEach((label, i) => {
    add("data", label, 7, 9 + i, 9);
    add("data", "", 9, 9 + i, 12);
});

// Marks table
const spans = [[7, 8], [8, 10], [10, 11], [11, 12], [12, 13], [13, 14], [14, 15], [15, 16]];
const titles = ["S/L", "Subjects of Name", "Marks", "Grade", "GPA", "Total GPA", "AVA GPA", "Total Grade"];
titles.forEach((t, i) => add("data th", t, spans[i][0], 16, spans[i][1]));

const marks = [
    ["Bangla", 80],
    ["English", 50],
    ["Since", 60],
    ["Math", 70],
    ["Reli", 30],
    ["Higher Math", 90],
    ["Biology", 33],
    ["Physical", 40]
];
marks.forEach((m, i) => {
    const values = [i + 1, m[0], m[1], "", "", "", "", ""];
    values.forEach((v, j) => {
        add("data " + (j === 2 ? "num" : "center"), v, spans[j][0], 17 + i, spans[j][1]);
    });
});

// Colour swatches
function swatches(id, colors) {
    const box = document.getElementById(id);
    colors.forEach((color) => {
        const el = document.createElement("i");
        el.style.background = color;
        box.appendChild(el);
    });
}

swatches("theme-main", ["#fff", "#000", "#eeece1", "#1f497d", "#4f81bd", "#c0504d", "#9bbb59", "#8064a2", "#4bacc6", "#f79646"]);
swatches("theme-shades", [
    "#f2f2f2", "#7f7f7f", "#ddd9c3", "#c6d9f0", "#dbe5f1", "#f2dcdb", "#ebf1dd", "#e5e0ec", "#dbeef3", "#fdeada",
    "#d8d8d8", "#595959", "#c4bd97", "#8db3e2", "#b8cce4", "#e5b9b7", "#d7e3bc", "#ccc1d9", "#b7dde8", "#fbd5b5",
    "#bfbfbf", "#3f3f3f", "#938953", "#548dd4", "#95b3d7", "#d99694", "#c3d69b", "#b2a2c7", "#92cddc", "#fac08f",
    "#a5a5a5", "#262626", "#494429", "#17365d", "#366092", "#953734", "#76923c", "#5f497a", "#31859b", "#e36c09",
    "#7f7f7f", "#0c0c0c", "#1d1b10", "#0f243e", "#244061", "#632423", "#4f6128", "#3f3151", "#205867", "#974806"
]);
swatches("standard", ["#b00000", "#f00", "#fdb813", "#fffde0", "#8cc48c", "#00a898", "#00b0f0", "#0070c0", "#002060", "#7030a0"]);
swatches("recent", ["#99ff66", "#f26a0c"]);
document.querySelector("#recent i").className = "picked";
```
